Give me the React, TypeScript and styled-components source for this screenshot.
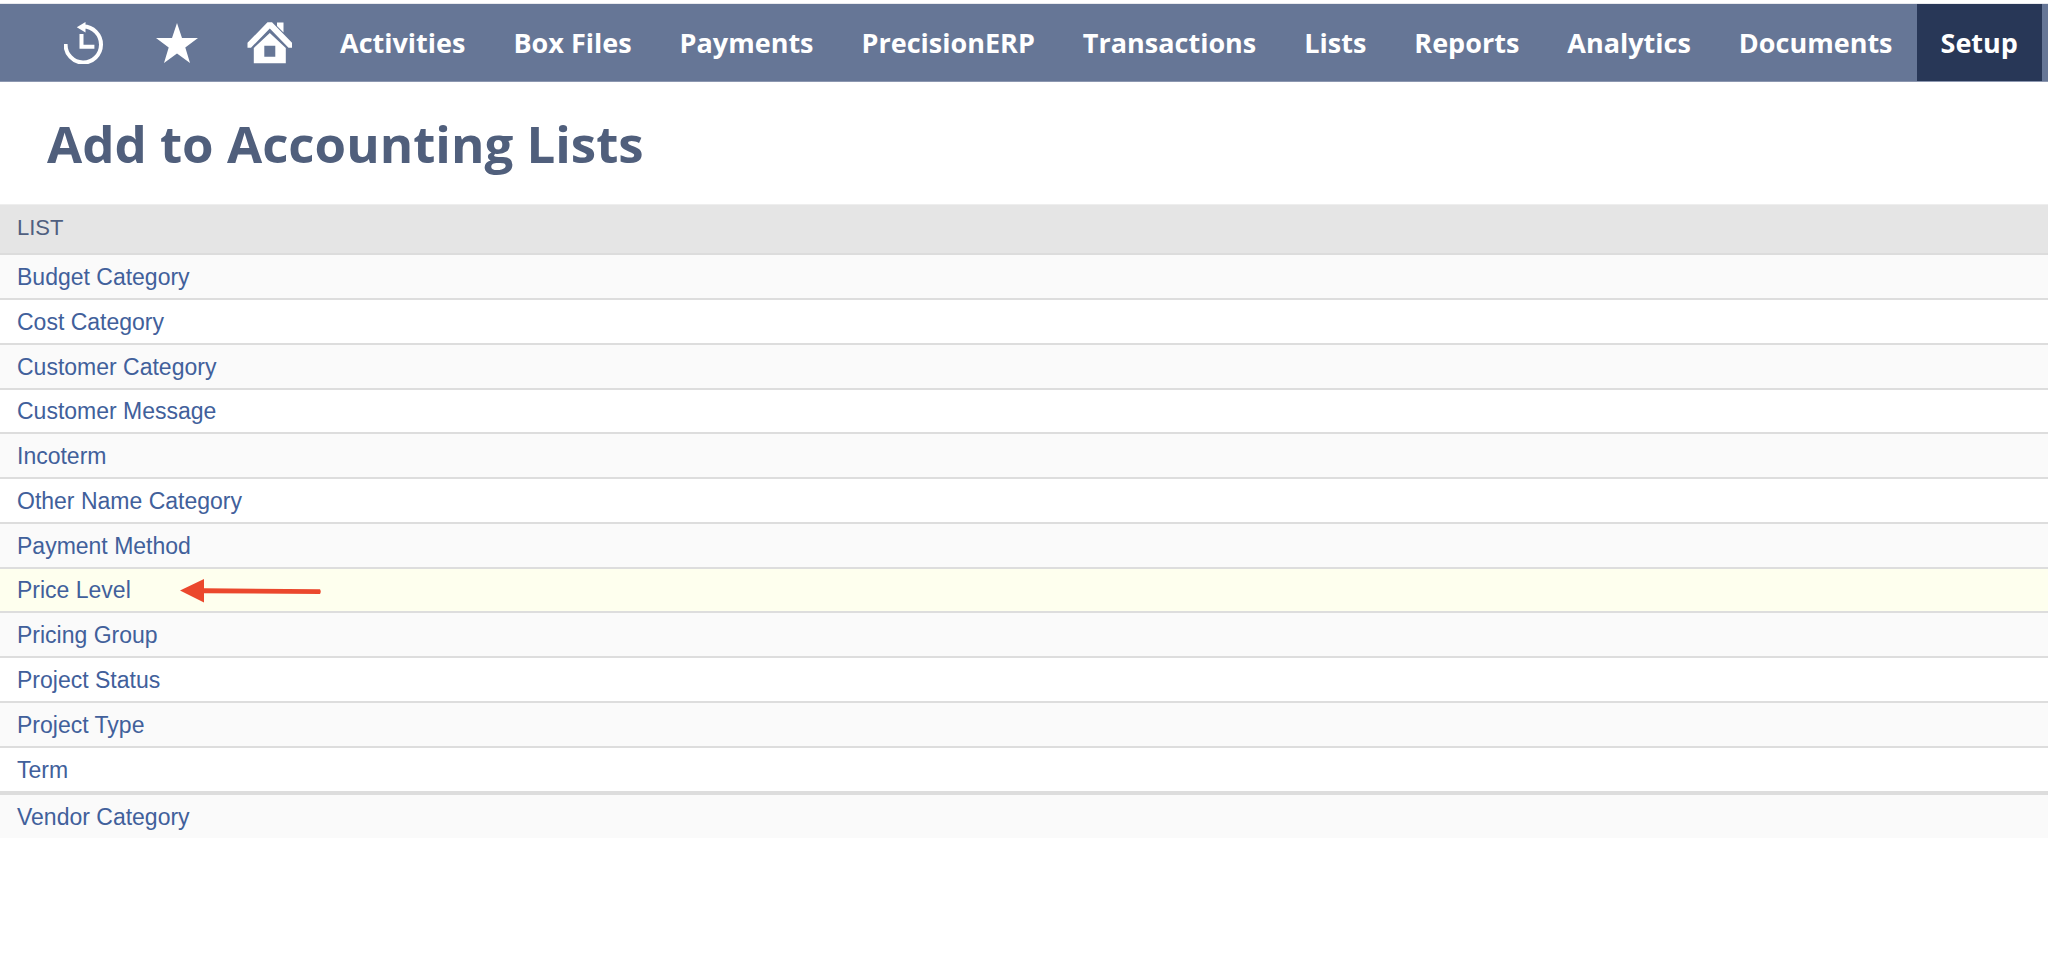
import React from "react";
import styled, { createGlobalStyle } from "styled-components";

const GlobalStyle = createGlobalStyle`
  body {
    margin: 0;
    background: #ffffff;
    font-family: "Liberation Sans", Arial, sans-serif;
  }
`;

const NavBar = styled.nav`
  display: flex;
  height: 77px;
  margin-top: 3px;
  padding-left: 37px;
  background: #667696;
  border-top: 1px solid #e9eaee;
  border-bottom: 1px solid #8c97b0;
`;

const NavIconLink = styled.a`
  display: flex;
  flex: none;
  align-items: center;
  justify-content: center;
  width: 93px;
  color: #ffffff;
`;

const NavLink = styled.a<{ $active?: boolean }>`
  display: flex;
  flex: none;
  align-items: center;
  padding: 0 24px;
  background: ${(p) => (p.$active ? "#283757" : "transparent")};
  color: #ffffff;
  font: bold 27px/36px "Open Sans", "Noto Sans", sans-serif;
  text-decoration: none;
  white-space: nowrap;
`;

const Title = styled.h1`
  margin: 0;
  padding: 26px 47px;
  color: #505f7c;
  font: bold 51px/70px "Open Sans", "Noto Sans", sans-serif;
`;

const ListTable = styled.table`
  width: 100%;
  border-spacing: 0;
`;

const HeaderCell = styled.th`
  box-sizing: border-box;
  height: 51px;
  padding: 0 17px 2px;
  background: #e5e5e5;
  border-top: 1px solid #eeeeee;
  border-bottom: 2px solid #dcdcdc;
  color: #4f5f7f;
  font-size: 22px;
  font-weight: normal;
  line-height: 24px;
  text-align: left;
`;

const Row = styled.tr<{ $highlighted?: boolean }>`
  height: 45px;
  background: ${(p) => (p.$highlighted ? "#feffee" : "#ffffff")};

  &:nth-child(odd) {
    background: #fafafa;
  }

  &:nth-child(4n) {
    height: 44px;
  }

  &:nth-last-child(2) {
    height: 47px;
  }

  &:nth-last-child(2) > td {
    border-bottom-width: 4px;
  }

  &:last-child {
    height: 43px;
  }

  &:last-child > td {
    border-bottom: 0;
  }
`;

const Cell = styled.td`
  padding: 0 17px;
  border-bottom: 2px solid #dddddd;
`;

const CellContent = styled.div`
  display: flex;
  align-items: center;
  gap: 49px;
`;

const ListLink = styled.a`
  color: #41609b;
  font-size: 23px;
  line-height: 26px;
  text-decoration: none;
`;

const HistoryIcon = () => (
  <svg width="40" height="42" viewBox="0 0 40 42" fill="none" aria-hidden="true">
    <path
      d="M1.6 22A17.7 18 0 1 0 19.3 4.6"
      stroke="currentColor"
      strokeWidth="4"
    />
    <path d="M12.8 5.2 21.5 0V10.5Z" fill="currentColor" />
    <path d="M17.5 12V24.8H30.4" stroke="currentColor" strokeWidth="4" />
  </svg>
);

const StarIcon = () => (
  <svg width="42" height="40" viewBox="0 0 42 40" fill="currentColor" aria-hidden="true">
    <path d="M21 0 26 15H42L29.3 24.6 34 40 21 30.4 8 40 12.7 24.6 0 15H16Z" />
  </svg>
);

const HomeIcon = () => (
  <svg width="46" height="42" viewBox="0 0 46 42" fill="currentColor" aria-hidden="true">
    <path d="M20.5 0.3H25L45 20.8V25.7H41.5L22.8 6.5 4 25.7H0.5V20.8Z" />
    <path d="M30 0.5H36.5V10.5L30 4Z" />
    <path
      fillRule="evenodd"
      d="M22.8 11 6.8 26V41.3H38.8V26ZM17.3 23.8H28.3V34.8H17.3Z"
    />
  </svg>
);

const ArrowMark = () => (
  <svg width="142" height="26" viewBox="0 -2 142 26" aria-hidden="true">
    <path d="M0 11.5 24 0V9.3L140 10.2Q141.5 12.6 140 15L24 14.3V23.5Z" fill="#eb482d" />
  </svg>
);

const menu = [
  "Activities",
  "Box Files",
  "Payments",
  "PrecisionERP",
  "Transactions",
  "Lists",
  "Reports",
  "Analytics",
  "Documents",
  "Setup",
];

const lists = [
  "Budget Category",
  "Cost Category",
  "Customer Category",
  "Customer Message",
  "Incoterm",
  "Other Name Category",
  "Payment Method",
  "Price Level",
  "Pricing Group",
  "Project Status",
  "Project Type",
  "Term",
  "Vendor Category",
];

export default function App() {
  return (
    <>
      <GlobalStyle />
      <NavBar>
        <NavIconLink href="#recent" aria-label="Recent records">
          <HistoryIcon />
        </NavIconLink>
        <NavIconLink href="#shortcuts" aria-label="Shortcuts">
          <StarIcon />
        </NavIconLink>
        <NavIconLink href="#home" aria-label="Home">
          <HomeIcon />
        </NavIconLink>
        {menu.map((label) => (
          <NavLink key={label} href={`#${label}`} $active={label === "Setup"}>
            {label}
          </NavLink>
        ))}
      </NavBar>
      <main>
        <Title>Add to Accounting Lists</Title>
        <ListTable>
          <thead>
            <tr>
              <HeaderCell scope="col">LIST</HeaderCell>
            </tr>
          </thead>
          <tbody>
            {lists.map((name) => {
              const highlighted = name === "Price Level";
              return (
                <Row key={name} $highlighted={highlighted}>
                  <Cell>
                    <CellContent>
                      <ListLink href={`#${name}`}>{name}</ListLink>
                      {highlighted && <ArrowMark />}
                    </CellContent>
                  </Cell>
                </Row>
              );
            })}
          </tbody>
        </ListTable>
      </main>
    </>
  );
}
